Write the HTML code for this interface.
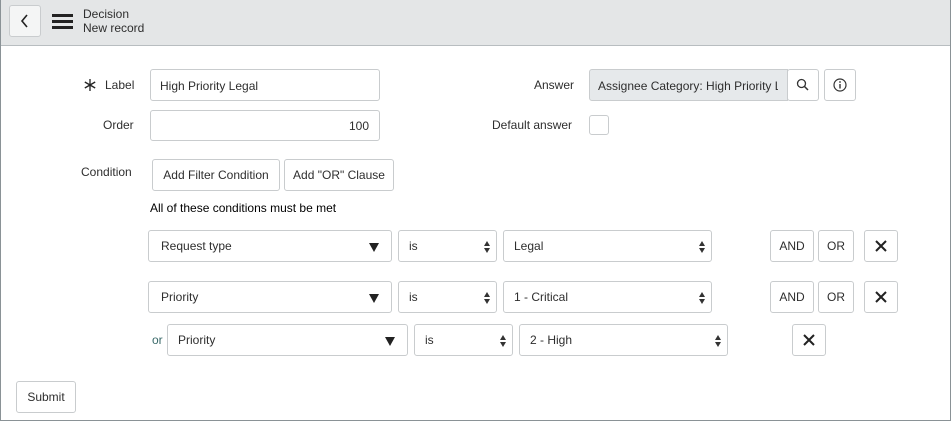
<!DOCTYPE html>
<html><head><meta charset="utf-8"><style>
*{box-sizing:border-box;margin:0;padding:0}
body{width:951px;height:421px;background:#fff;font-family:"Liberation Sans",sans-serif;font-size:12px;color:#2e2e2e;position:relative;overflow:hidden}
.frame{position:absolute;left:0;top:0;width:951px;height:421px;border:1px solid #8a9296;border-top:none}
.hdr{position:absolute;left:0;top:0;width:951px;height:46px;background:#e4e6e7;border-bottom:1px solid #b8bdc0}
.a{position:absolute}
.box{position:absolute;border:1px solid #c9ccce;border-radius:3px;background:#fff}
.t{position:absolute;white-space:nowrap;line-height:14px}
.btn{position:absolute;border:1px solid #c9ccce;border-radius:3px;background:#fff;display:flex;align-items:center;justify-content:center;white-space:nowrap}
.sel{position:absolute;border:1px solid #c9ccce;border-radius:3px;background:#fff;padding-left:10px;display:flex;align-items:center}
.tri{position:absolute;right:12px;top:12px;width:0;height:0;border-left:5px solid transparent;border-right:5px solid transparent;border-top:9px solid #222}
.ud{position:absolute;right:6px;top:10px;width:6px;height:12px}
</style></head><body>
<div class="hdr"></div>
<div class="frame"></div>
<div class="btn" style="left:9px;top:5px;width:32px;height:32px;background:#f4f5f5"><svg width="12" height="16"><path d="M8 2 L3 8 L8 14" stroke="#222" stroke-width="1.6" fill="none"/></svg></div>
<svg class="a" style="left:52px;top:14px" width="21" height="15"><rect y="0" width="21" height="3" fill="#222"/><rect y="6" width="21" height="3" fill="#222"/><rect y="12" width="21" height="3" fill="#222"/></svg>
<div class="t" style="left:83px;top:7px">Decision</div>
<div class="t" style="left:83px;top:21px">New record</div>

<svg class="a" style="left:84px;top:79px" width="12" height="12"><path d="M6 0 V12 M0.8 3 L11.2 9 M11.2 3 L0.8 9" stroke="#222" stroke-width="1.3"/></svg>
<div class="t" style="left:105px;top:78px">Label</div>
<div class="box" style="left:150px;top:69px;width:230px;height:32px"></div>
<div class="t" style="left:160px;top:79px">High Priority Legal</div>
<div class="t" style="left:103px;top:118px">Order</div>
<div class="box" style="left:150px;top:110px;width:230px;height:31px"></div>
<div class="t" style="left:349px;top:119px">100</div>

<div class="t" style="left:534px;top:78px">Answer</div>
<div class="box" style="left:589px;top:69px;width:199px;height:32px;background:#e6e9eb;border-radius:3px 0 0 3px"></div>
<div class="t" style="left:598px;top:79px;width:180px;overflow:hidden">Assignee Category: High Priority L</div>
<div class="btn" style="left:787px;top:69px;width:32px;height:32px"><svg width="14" height="14"><circle cx="5.5" cy="5.5" r="4" stroke="#333" stroke-width="1.3" fill="none"/><path d="M8.5 8.5 L12 12" stroke="#333" stroke-width="1.5"/></svg></div>
<div class="btn" style="left:824px;top:69px;width:32px;height:32px"><svg width="14" height="14"><circle cx="7" cy="7" r="6" stroke="#333" stroke-width="1.2" fill="none"/><path d="M7 6 V10.5" stroke="#333" stroke-width="1.4"/><circle cx="7" cy="4" r="0.9" fill="#333"/></svg></div>
<div class="t" style="left:492px;top:118px">Default answer</div>
<div class="box" style="left:589px;top:115px;width:20px;height:20px"></div>

<div class="t" style="left:81px;top:165px">Condition</div>
<div class="btn" style="left:152px;top:159px;width:128px;height:32px">Add Filter Condition</div>
<div class="btn" style="left:284px;top:159px;width:110px;height:32px">Add "OR" Clause</div>
<div class="t" style="left:150px;top:201px;color:#000">All of these conditions must be met</div>

<div class="sel" style="left:148px;top:230px;width:244px;height:32px;padding-left:12px">Request type<div class="tri"></div></div>
<div class="sel" style="left:398px;top:230px;width:99px;height:32px">is<svg class="ud" viewBox="0 0 6 12"><path d="M0 5 L3 0 L6 5Z M0 7 L3 12 L6 7Z" fill="#333"/></svg></div>
<div class="sel" style="left:503px;top:230px;width:209px;height:32px">Legal<svg class="ud" viewBox="0 0 6 12"><path d="M0 5 L3 0 L6 5Z M0 7 L3 12 L6 7Z" fill="#333"/></svg></div>
<div class="btn" style="left:770px;top:230px;width:44px;height:32px">AND</div>
<div class="btn" style="left:818px;top:230px;width:36px;height:32px">OR</div>
<div class="btn" style="left:864px;top:230px;width:34px;height:32px"><svg width="12" height="12"><path d="M1 1 L11 11 M11 1 L1 11" stroke="#222" stroke-width="2"/></svg></div>
<div class="sel" style="left:148px;top:281px;width:244px;height:32px;padding-left:12px">Priority<div class="tri"></div></div>
<div class="sel" style="left:398px;top:281px;width:99px;height:32px">is<svg class="ud" viewBox="0 0 6 12"><path d="M0 5 L3 0 L6 5Z M0 7 L3 12 L6 7Z" fill="#333"/></svg></div>
<div class="sel" style="left:503px;top:281px;width:209px;height:32px">1 - Critical<svg class="ud" viewBox="0 0 6 12"><path d="M0 5 L3 0 L6 5Z M0 7 L3 12 L6 7Z" fill="#333"/></svg></div>
<div class="btn" style="left:770px;top:281px;width:44px;height:32px">AND</div>
<div class="btn" style="left:818px;top:281px;width:36px;height:32px">OR</div>
<div class="btn" style="left:864px;top:281px;width:34px;height:32px"><svg width="12" height="12"><path d="M1 1 L11 11 M11 1 L1 11" stroke="#222" stroke-width="2"/></svg></div>
<div class="t" style="left:152px;top:333px;color:#3a6a6a">or</div>
<div class="sel" style="left:167px;top:324px;width:241px;height:32px">Priority<div class="tri"></div></div>
<div class="sel" style="left:414px;top:324px;width:99px;height:32px">is<svg class="ud" viewBox="0 0 6 12"><path d="M0 5 L3 0 L6 5Z M0 7 L3 12 L6 7Z" fill="#333"/></svg></div>
<div class="sel" style="left:519px;top:324px;width:209px;height:32px">2 - High<svg class="ud" viewBox="0 0 6 12"><path d="M0 5 L3 0 L6 5Z M0 7 L3 12 L6 7Z" fill="#333"/></svg></div>
<div class="btn" style="left:792px;top:324px;width:34px;height:32px"><svg width="12" height="12"><path d="M1 1 L11 11 M11 1 L1 11" stroke="#222" stroke-width="2"/></svg></div>

<div class="btn" style="left:16px;top:381px;width:60px;height:32px">Submit</div>
</body></html>
